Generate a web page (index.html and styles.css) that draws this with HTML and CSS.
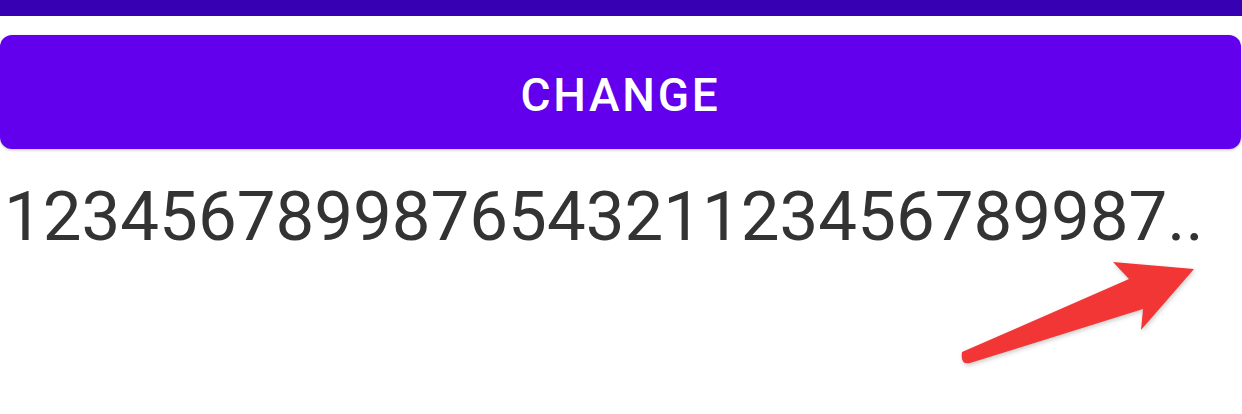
FILE: index.html
```html
<!DOCTYPE html>
<html lang="en">
<head>
  <meta charset="UTF-8">
  <title>Change</title>
  <link rel="stylesheet" href="styles.css">
</head>
<body>

  <div class="app-bar"></div>

  <main class="content">
    <button class="change-button">CHANGE</button>
    <div class="number-text">123456789987654321123456789987..</div>
  </main>

  <svg class="pointer-arrow" width="260" height="110" viewBox="950 258 260 110">
    <path d="M962 352 L1129 279 L1113 262 L1194 269 L1141 330 L1143 309 L970 363 Q960 365 962 352 Z" fill="#f23636"/>
  </svg>

</body>
</html>
```

FILE: styles.css
```css
body {
  margin: 0;
  background: #ffffff;
  font-family: Roboto, 'Noto Sans', sans-serif;
  position: relative;
  width: 1242px;
  height: 414px;
  overflow: hidden;
}

.app-bar {
  height: 16px;
  background-color: #3700b3;
}

.content {
  display: flex;
  flex-direction: column;
  padding-top: 19px;
}

.change-button {
  height: 114px;
  margin: 0 1px 0 0;
  padding-top: 6px;
  background-color: #6200ee;
  color: #ffffff;
  border: none;
  border-radius: 12px;
  font-family: Roboto, sans-serif;
  font-weight: 500;
  font-size: 46px;
  letter-spacing: 0.06em;
  box-shadow: 0 1px 3px rgba(0, 0, 0, 0.25);
}

.number-text {
  margin-top: 27px;
  padding-left: 4px;
  font-size: 69px;
  line-height: 82px;
  color: #333333;
  white-space: nowrap;
}

.pointer-arrow {
  position: absolute;
  left: 950px;
  top: 258px;
  filter: drop-shadow(1px 2px 2px rgba(0, 0, 0, 0.2));
}
```
